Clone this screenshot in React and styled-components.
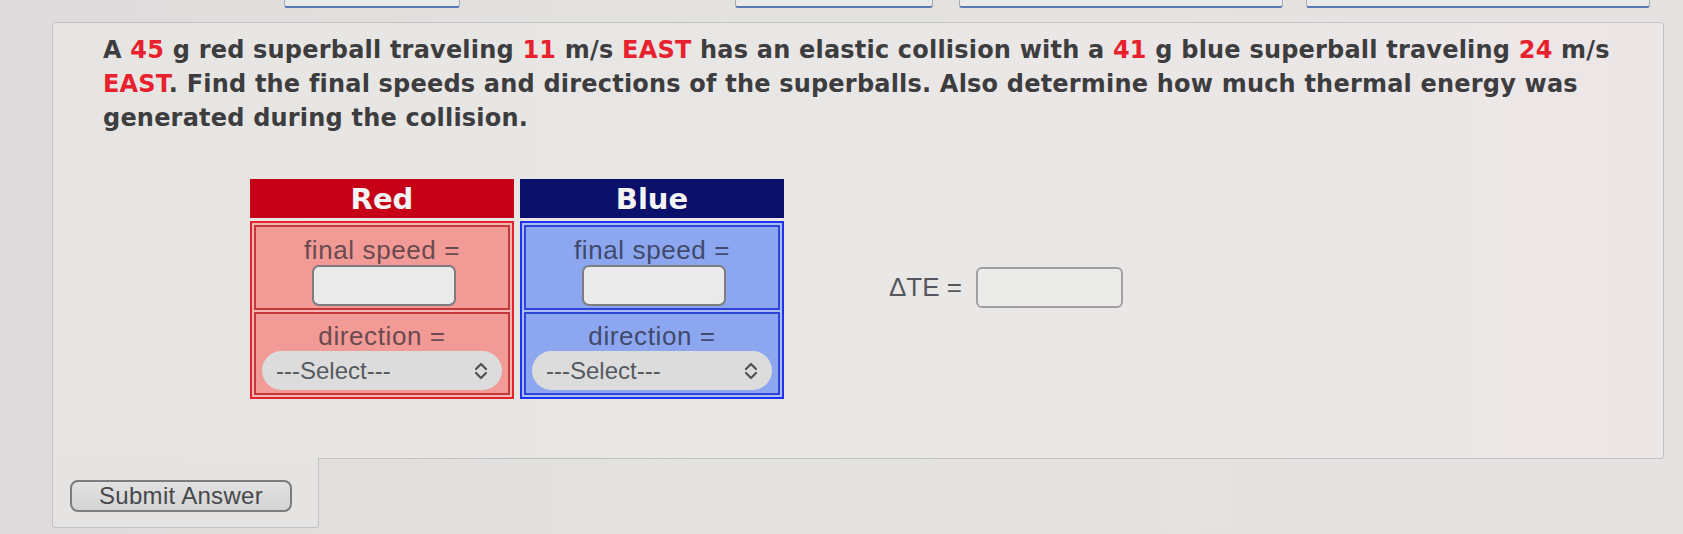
import React from "react";
import styled, { createGlobalStyle } from "styled-components";

const GlobalStyle = createGlobalStyle`
  html, body { margin: 0; padding: 0; }
  body {
    background: #dedbda;
    font-family: "Liberation Sans", Arial, sans-serif;
  }
`;

const Page = styled.div`
  width: 1683px;
  height: 534px;
  overflow: hidden;
  background: linear-gradient(90deg, #dfdadb 0%, #e3e2df 40%, #e6e1e1 100%);
  display: flex;
  flex-direction: column;
`;

const TabStrip = styled.div`
  height: 22px;
  display: flex;
  align-items: flex-start;
  padding-left: 284px;
`;

const TopTab = styled.div`
  width: ${(p) => p.$w}px;
  margin-left: ${(p) => p.$ml || 0}px;
  height: 6px;
  border: 1px solid #a9adb4;
  border-top: none;
  border-bottom: 2px solid #5a78b0;
  border-radius: 0 0 3px 3px;
  background: #e9e9ea;
`;

const Panel = styled.div`
  margin-left: 52px;
  width: 1612px;
  height: 437px;
  box-sizing: border-box;
  border: 1px solid #c3c3c3;
  border-radius: 3px;
  background: linear-gradient(90deg, #e6e5e2 0%, #e9e7e5 50%, #ede6e7 100%);
  padding: 10px 0 0 50px;
  display: flex;
  flex-direction: column;
`;

const Question = styled.div`
  font-family: "DejaVu Sans", Verdana, sans-serif;
  font-weight: bold;
  font-size: 24px;
  line-height: 34px;
  color: #3d3d3f;
  letter-spacing: 0.2px;
`;

const Hl = styled.span`
  color: #e8212f;
`;

const AnswerRow = styled.div`
  margin-top: 44px;
  margin-left: 147px;
  display: flex;
  align-items: center;
`;

const Grid = styled.div`
  display: grid;
  grid-template-columns: 264px 264px;
  column-gap: 6px;
`;

const Column = styled.div`
  display: flex;
  flex-direction: column;
  gap: 3px;
`;

const Header = styled.div`
  height: 39px;
  background: ${(p) => (p.$blue ? "#0b106b" : "#c60017")};
  color: #f4f4f4;
  font-family: "DejaVu Sans", Verdana, sans-serif;
  font-weight: bold;
  font-size: 29px;
  display: flex;
  align-items: center;
  justify-content: center;
`;

const Body = styled.div`
  border: 2px solid ${(p) => (p.$blue ? "#1f33ee" : "#e3232c")};
  background: ${(p) => (p.$blue ? "#a9bcf4" : "#f6b6b3")};
  padding: 2px;
  display: flex;
  flex-direction: column;
  gap: 2px;
`;

const Cell = styled.div`
  border: 2px solid ${(p) => (p.$blue ? "#2e45d6" : "#c43a3c")};
  background: ${(p) => (p.$blue ? "#8ca7ef" : "#f29a96")};
  height: ${(p) => p.$h}px;
  box-sizing: border-box;
  display: flex;
  flex-direction: column;
  align-items: center;
  padding-top: ${(p) => p.$pt}px;
`;

const Label = styled.div`
  font-size: 26px;
  letter-spacing: 0.6px;
  line-height: 30px;
  color: ${(p) => (p.$blue ? "#404a6c" : "#6a4a50")};
`;

const TextInput = styled.div`
  width: 144px;
  height: 41px;
  box-sizing: border-box;
  border: 2px solid #7d7d80;
  border-radius: 7px;
  background: #eaeaea;
  margin-left: 4px;
`;

const Select = styled.div`
  width: 240px;
  height: 39px;
  box-sizing: border-box;
  border-radius: 20px;
  background: #dcdcdc;
  display: flex;
  align-items: center;
  justify-content: space-between;
  padding: 0 14px 0 14px;
  font-size: 24px;
  color: #555a62;
`;

const Delta = styled.div`
  margin-left: 105px;
  margin-top: -3px;
  display: flex;
  align-items: center;
  gap: 14px;
  font-size: 26px;
  color: #55575c;
`;

const DeltaInput = styled.div`
  width: 147px;
  height: 41px;
  box-sizing: border-box;
  border: 2px solid #a0a0a3;
  border-radius: 6px;
  background: #ebebea;
`;

const Footer = styled.div`
  display: flex;
  margin-left: 52px;
`;

const SubmitTab = styled.div`
  width: 267px;
  height: 70px;
  box-sizing: border-box;
  margin-top: -1px;
  border: 1px solid #c3c3c3;
  border-top: none;
  border-radius: 0 0 3px 3px;
  background: #e5e4e2;
  padding: 22px 0 0 17px;
`;

const SubmitButton = styled.button`
  width: 222px;
  height: 32px;
  box-sizing: border-box;
  border: 2px solid #7c7c80;
  border-radius: 8px;
  background: linear-gradient(180deg, #e2e2e2 0%, #d4d4d4 100%);
  font-family: "Liberation Sans", Arial, sans-serif;
  font-size: 24px;
  letter-spacing: 0.3px;
  color: #46484c;
  padding: 0;
  display: flex;
  align-items: center;
  justify-content: center;
`;

const Chevron = () => (
  <svg width="14" height="18" viewBox="0 0 14 18" fill="none">
    <path d="M2 7 L7 2 L12 7" stroke="#4d5157" strokeWidth="2.2" strokeLinecap="round" strokeLinejoin="round" />
    <path d="M2 11 L7 16 L12 11" stroke="#4d5157" strokeWidth="2.2" strokeLinecap="round" strokeLinejoin="round" />
  </svg>
);

const BallColumn = ({ name, blue }) => (
  <Column>
    <Header $blue={blue}>{name}</Header>
    <Body $blue={blue}>
      <Cell $blue={blue} $h={85} $pt={8}>
        <Label $blue={blue}>final speed =</Label>
        <TextInput />
      </Cell>
      <Cell $blue={blue} $h={83} $pt={7}>
        <Label $blue={blue}>direction =</Label>
        <Select>
          <span>---Select---</span>
          <Chevron />
        </Select>
      </Cell>
    </Body>
  </Column>
);

export default function App() {
  return (
    <>
      <GlobalStyle />
      <Page>
        <TabStrip>
          <TopTab $w={174} />
          <TopTab $w={196} $ml={275} />
          <TopTab $w={322} $ml={26} />
          <TopTab $w={342} $ml={23} />
        </TabStrip>
        <Panel>
          <Question>
            A <Hl>45</Hl> g red superball traveling <Hl>11</Hl> m/s <Hl>EAST</Hl> has an elastic collision with a <Hl>41</Hl> g blue superball traveling <Hl>24</Hl> m/s
            <br />
            <Hl>EAST</Hl>. Find the final speeds and directions of the superballs. Also determine how much thermal energy was
            <br />
            generated during the collision.
          </Question>
          <AnswerRow>
            <Grid>
              <BallColumn name="Red" />
              <BallColumn name="Blue" blue />
            </Grid>
            <Delta>
              <span>ΔTE =</span>
              <DeltaInput />
            </Delta>
          </AnswerRow>
        </Panel>
        <Footer>
          <SubmitTab>
            <SubmitButton>Submit Answer</SubmitButton>
          </SubmitTab>
        </Footer>
      </Page>
    </>
  );
}
